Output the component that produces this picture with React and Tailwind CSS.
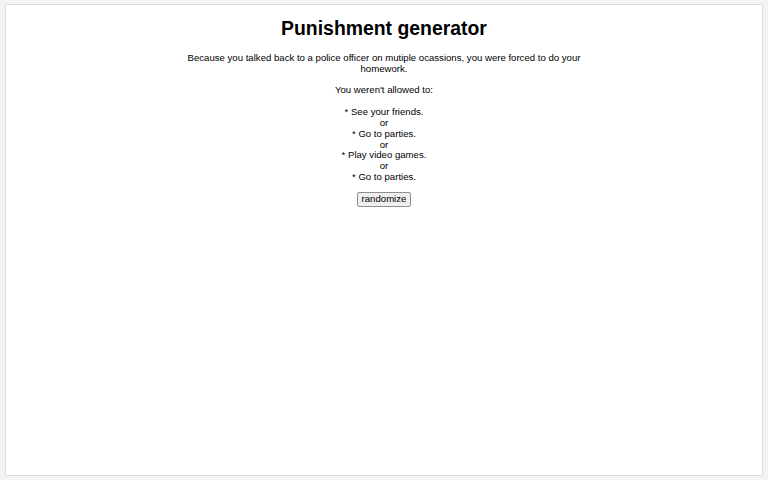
import React, { useState } from "react";

const punishments = [
  "See your friends.",
  "Go to parties.",
  "Play video games.",
  "Go to parties.",
];

const App = () => {
  const [items] = useState(punishments);

  return (
    <div className="h-screen w-full bg-[#f3f3f3] px-[5px] pt-[4px] pb-[4px] font-['Liberation_Sans',Arial,sans-serif] text-black">
      <div className="flex h-full flex-col items-center border border-[#dcdcdc] bg-white">
        <h1 className="mt-[12px] text-[19.4px] font-bold leading-[23px]">
          Punishment generator
        </h1>

        <div className="mt-[13px] flex max-w-[400px] flex-col items-center text-center text-[9.6px] leading-[10.83px]">
          <p>
            Because you talked back to a police officer on mutiple ocassions,
            you were forced to do your homework.
          </p>
          <p className="mt-[10.83px]">You weren't allowed to:</p>
          <div className="mt-[10.83px]">
            {items.map((item, i) => (
              <React.Fragment key={i}>
                {i > 0 && <div>or</div>}
                <div>* {item}</div>
              </React.Fragment>
            ))}
          </div>
          <button className="mt-[9px] rounded-[2px] border border-[#8f8f8f] bg-[#efefef] px-[4px] py-[1.5px] text-[9.6px] leading-[10px]">
            randomize
          </button>
        </div>
      </div>
    </div>
  );
};

export default App;
